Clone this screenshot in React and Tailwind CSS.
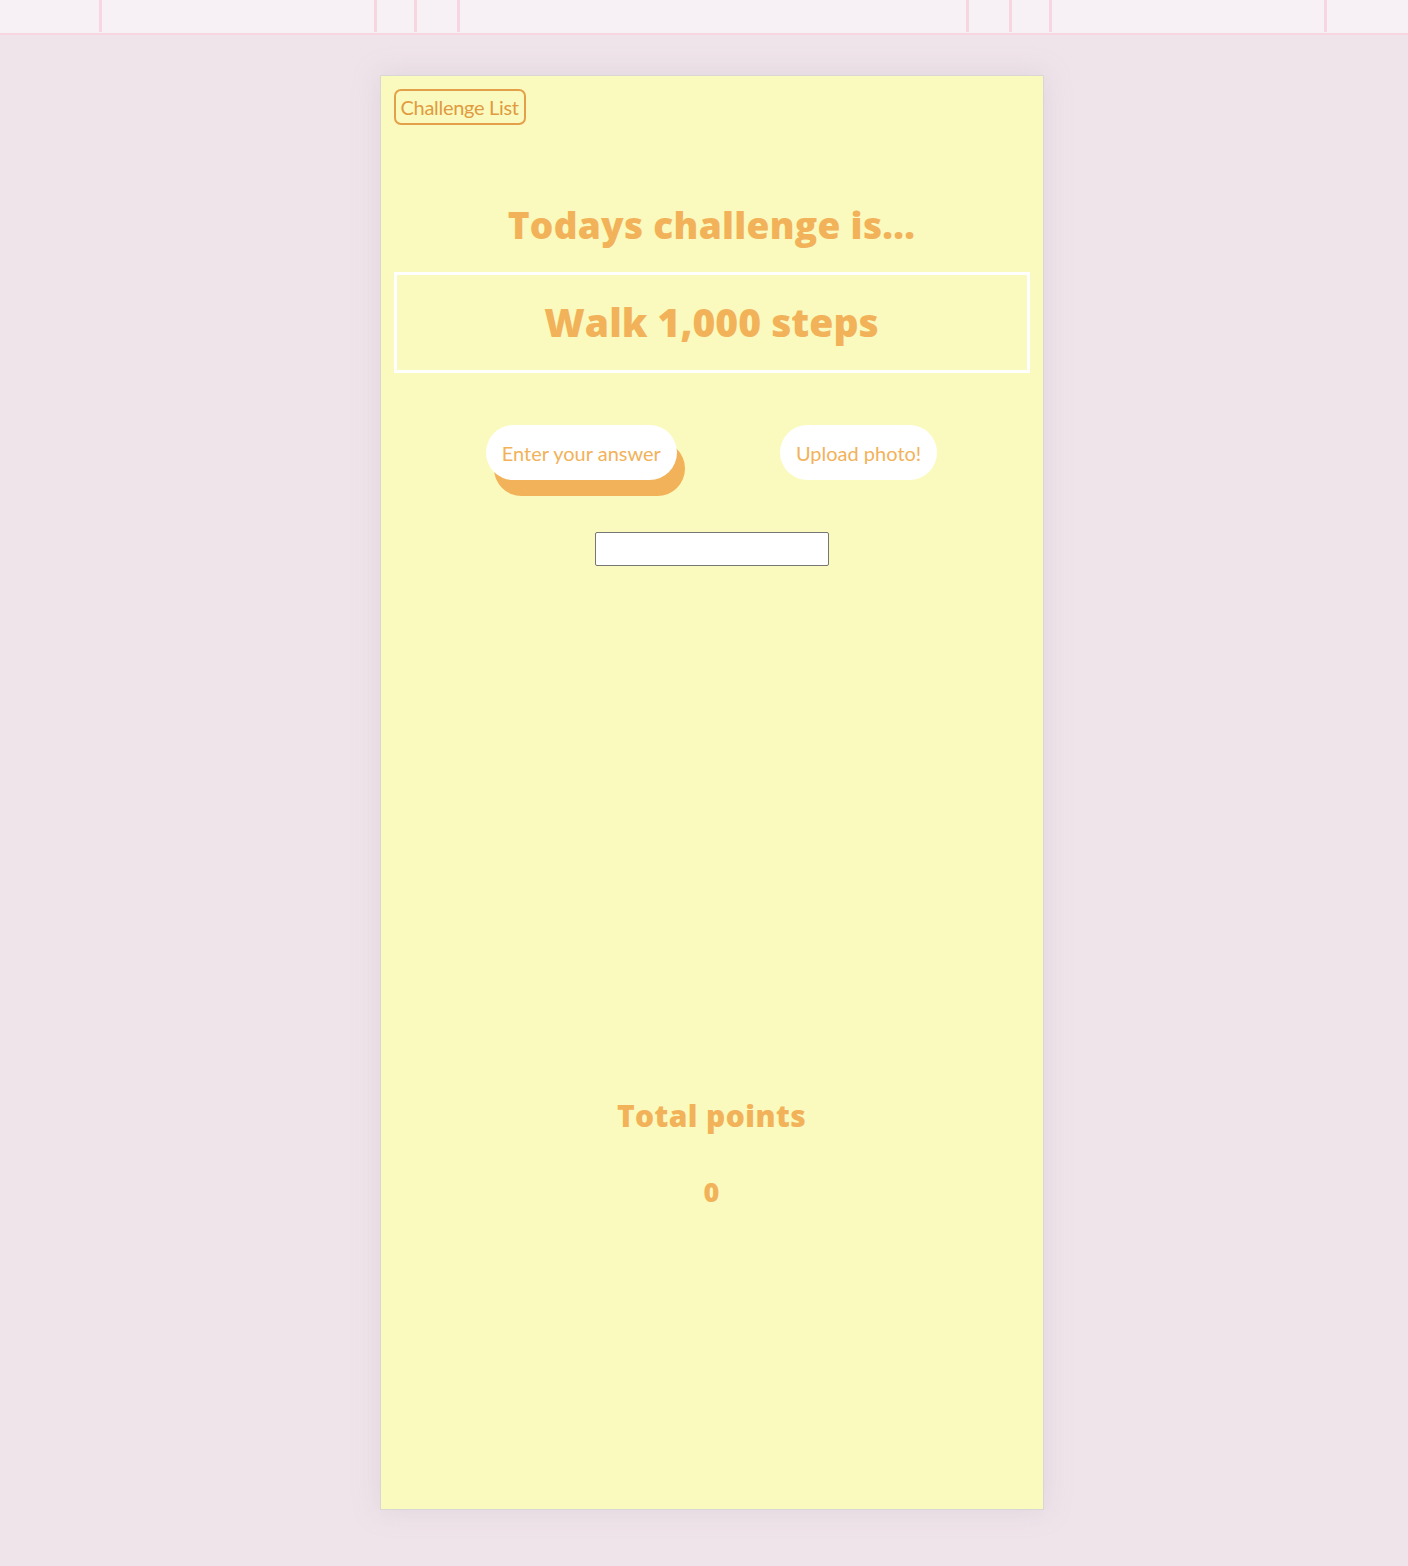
export default function App() {
  const lines = [99, 374, 414, 457, 966, 1009, 1049, 1324];
  const heavy = { fontFamily: "'Open Sans', Lato, sans-serif" };
  return (
    <div className="min-h-[1566px] w-full bg-[#efe4ea]" style={{ fontFamily: "Lato, 'Open Sans', sans-serif" }}>
      <div className="relative h-[35px] w-full bg-[#f7f0f5] border-b-2 border-[#f7d6e2]">
        {lines.map((x) => (
          <div key={x} className="absolute top-0 h-[32px] w-[3px] bg-[#f7d6e2]" style={{ left: x }} />
        ))}
      </div>
      <div className="flex justify-center pt-[40px] pb-[56px] pl-[15px]">
        <div className="flex h-[1435px] w-[664px] flex-col border border-[#d9d6d6] bg-[#fafabe] px-[13px] pt-[13px] shadow-[0_0_24px_rgba(200,180,195,0.35)]">
          <div>
            <button className="h-[36px] rounded-[7px] border-2 border-[#e4a048] px-[5px] text-[20px] leading-none tracking-[-0.3px] text-[#e09a40]">
              Challenge List
            </button>
          </div>
          <h1 style={heavy} className="mt-[76px] text-center text-[37px] font-extrabold leading-[48px] tracking-[0.3px] text-[#f2b25a]">
            Todays challenge is...
          </h1>
          <div className="mt-[23px] flex h-[101px] items-center justify-center border-[3px] border-white">
            <span style={heavy} className="text-[39px] font-extrabold text-[#f2b25a]">Walk 1,000 steps</span>
          </div>
          <div className="mt-[52px] flex justify-center gap-[103px]">
            <button className="h-[55px] rounded-full bg-white px-[16px] text-[20px] text-[#f2b25a] shadow-[8px_16px_0_#f2b25a]">
              Enter your answer
            </button>
            <button className="h-[55px] rounded-full bg-white px-[16px] text-[20px] text-[#f2b25a]">
              Upload photo!
            </button>
          </div>
          <div className="mt-[52px] flex justify-center">
            <input className="h-[34px] w-[234px] rounded-[2px] border border-[#767676] bg-white" />
          </div>
          <h2 style={heavy} className="mt-[530px] text-center text-[30px] font-extrabold leading-[40px] tracking-[0.4px] text-[#f2b25a]">Total points</h2>
          <div style={heavy} className="mt-[36px] text-center text-[27px] font-extrabold leading-[40px] text-[#f2b25a]">0</div>
        </div>
      </div>
    </div>
  );
}
